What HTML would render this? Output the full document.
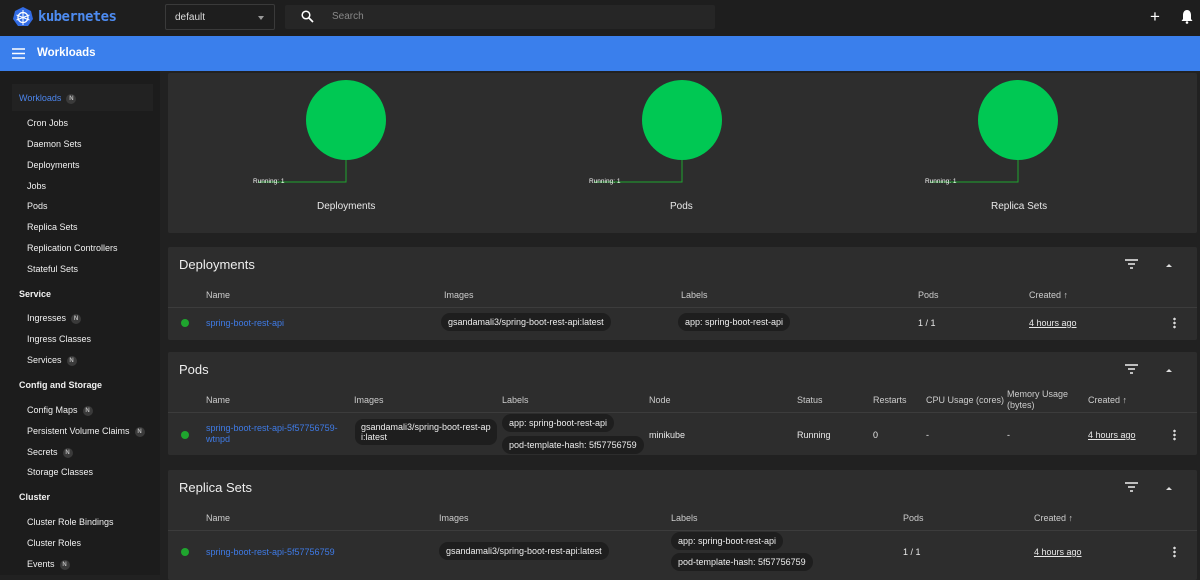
<!DOCTYPE html><html><head><meta charset="utf-8"><style>
*{margin:0;padding:0;box-sizing:border-box}
body{width:1200px;height:575px;overflow:hidden;background:#212121;font-family:"Liberation Sans",sans-serif;color:#e8e8e8;position:relative;font-size:9px}
.a{position:absolute;white-space:nowrap}
.top{left:0;top:0;width:1200px;height:36px;background:#1e1e1e}
.blue{left:0;top:36px;width:1200px;height:35px;background:#3a7fec}
.side{left:0;top:71px;width:160px;height:504px;background:#1c1c1c}
.card{background:#2d2d2d;border-radius:2px}
.n{display:inline-block;width:10px;height:10px;border-radius:50%;background:#3a3a3a;color:#bbb;font-size:6px;text-align:center;line-height:10px;margin-left:5px;vertical-align:1px;font-weight:bold}
.si{left:27px;font-size:9px;color:#f0f0f0}
.sh{left:19px;font-size:9px;font-weight:bold;color:#f0f0f0}
.ttl{font-size:13px;color:#eee}
.hd{font-size:9px;color:#ccc}
.lk{color:#3f7be6;font-size:9px}
.chip{background:#1e1e1e;border-radius:9px;padding:4px 7px;font-size:9px;color:#eee}
.dot{width:8px;height:8px;border-radius:50%;background:#1fa52e}
.sep{height:1px;background:#3c3c3c}
.circ{width:80px;height:80px;border-radius:50%;background:#00c853}
.u{text-decoration:underline}
.keb{width:3px;height:12px;background:radial-gradient(circle,#ddd 1.2px,transparent 1.4px) 0 0/3px 4px}
</style></head><body>
<div class="a top"></div>
<svg class="a" style="left:12px;top:6px" width="22" height="22" viewBox="0 0 22 22"><polygon points="11,1 19,5 21,13 16,20 6,20 1,13 3,5" fill="#326ce5"/><circle cx="11" cy="11.5" r="5" fill="none" stroke="#fff" stroke-width="1.3"/><path d="M11 4v15M4.5 9l13 5M17.5 9l-13 5" stroke="#fff" stroke-width="1"/></svg>
<div class="a" style="left:38px;top:9px;font-size:14px;font-weight:bold;color:#4d8bf0;font-family:'DejaVu Sans Mono',monospace;letter-spacing:-0.6px">kubernetes</div>
<div class="a" style="left:165px;top:4px;width:110px;height:26px;border:1px solid #3a3a3a;border-radius:2px;background:#1e1e1e"></div>
<div class="a" style="left:175px;top:12px;font-size:10px;color:#ddd">default</div>
<div class="a" style="left:258px;top:16px;border:3px solid transparent;border-top:4px solid #999"></div>
<div class="a" style="left:285px;top:5px;width:430px;height:24px;background:#262626;border-radius:2px"></div>
<svg class="a" style="left:301px;top:10px" width="13" height="13"><circle cx="5" cy="5" r="3.8" fill="none" stroke="#fff" stroke-width="1.5"/><path d="M8 8l4 4" stroke="#fff" stroke-width="1.7"/></svg>
<div class="a" style="left:332px;top:11px;font-size:10px;color:#888">Search</div>
<div class="a" style="left:1150px;top:7px;font-size:17px;color:#fff">+</div>
<svg class="a" style="left:1181px;top:9px" width="12" height="15" viewBox="0 0 12 15"><path d="M6 1c-3 0-4 3-4 5v4l-1.5 2h11L10 10V6c0-2-1-5-4-5z" fill="#fff"/><circle cx="6" cy="13.5" r="1.3" fill="#fff"/></svg>
<div class="a blue"></div>
<svg class="a" style="left:12px;top:48px" width="14" height="11"><path d="M0 1h13M0 5.5h13M0 10h13" stroke="#fff" stroke-width="1.6"/></svg>
<div class="a" style="left:37px;top:47px;font-size:11.5px;font-weight:bold;color:#fff">Workloads</div>
<div class="a side"></div>
<div class="a" style="left:12px;top:84px;width:141px;height:27px;background:#222"></div>
<div class="a" style="left:19px;top:93px;font-size:9px;color:#4c86ee">Workloads<span class="n">N</span></div>
<div class="a si" style="top:118px">Cron Jobs</div>
<div class="a si" style="top:139px">Daemon Sets</div>
<div class="a si" style="top:160px">Deployments</div>
<div class="a si" style="top:181px">Jobs</div>
<div class="a si" style="top:201px">Pods</div>
<div class="a si" style="top:222px">Replica Sets</div>
<div class="a si" style="top:243px">Replication Controllers</div>
<div class="a si" style="top:264px">Stateful Sets</div>
<div class="a sh" style="top:289px">Service</div>
<div class="a si" style="top:313px">Ingresses<span class="n">N</span></div>
<div class="a si" style="top:334px">Ingress Classes</div>
<div class="a si" style="top:355px">Services<span class="n">N</span></div>
<div class="a sh" style="top:380px">Config and Storage</div>
<div class="a si" style="top:405px">Config Maps<span class="n">N</span></div>
<div class="a si" style="top:426px">Persistent Volume Claims<span class="n">N</span></div>
<div class="a si" style="top:447px">Secrets<span class="n">N</span></div>
<div class="a si" style="top:467px">Storage Classes</div>
<div class="a sh" style="top:492px">Cluster</div>
<div class="a si" style="top:517px">Cluster Role Bindings</div>
<div class="a si" style="top:538px">Cluster Roles</div>
<div class="a si" style="top:559px">Events<span class="n">N</span></div>

<div class="a card" style="left:168px;top:73px;width:1029px;height:160px"></div>
<div class="a circ" style="left:306px;top:80px"></div>
<div class="a circ" style="left:642px;top:80px"></div>
<div class="a circ" style="left:978px;top:80px"></div>
<svg class="a" style="left:168px;top:73px" width="1029" height="160"><g stroke="#1fa52e" stroke-width="1" fill="none"><path d="M178 87v22h-88"/><path d="M514 87v22h-88"/><path d="M850 87v22h-88"/></g></svg>
<div class="a" style="left:253px;top:178px;font-size:6.5px;color:#fff">Running: 1</div>
<div class="a" style="left:589px;top:178px;font-size:6.5px;color:#fff">Running: 1</div>
<div class="a" style="left:925px;top:178px;font-size:6.5px;color:#fff">Running: 1</div>
<div class="a" style="left:317px;top:201px;font-size:10px">Deployments</div>
<div class="a" style="left:670px;top:201px;font-size:10px">Pods</div>
<div class="a" style="left:991px;top:201px;font-size:10px">Replica Sets</div>

<!-- Deployments -->
<div class="a card" style="left:168px;top:247px;width:1029px;height:93px"></div>
<div class="a ttl" style="left:179px;top:257px">Deployments</div>
<svg class="a" style="left:1125px;top:259px" width="13" height="10"><path d="M0 1h13M3 5h7M5 9h3" stroke="#eee" stroke-width="1.4"/></svg>
<div class="a" style="left:1166px;top:261px;border:3px solid transparent;border-bottom:3px solid #ddd"></div>
<div class="a hd" style="left:206px;top:290px">Name</div>
<div class="a hd" style="left:444px;top:290px">Images</div>
<div class="a hd" style="left:681px;top:290px">Labels</div>
<div class="a hd" style="left:918px;top:290px">Pods</div>
<div class="a hd" style="left:1029px;top:290px">Created ↑</div>
<div class="a sep" style="left:168px;top:307px;width:1029px"></div>
<div class="a dot" style="left:181px;top:319px"></div>
<div class="a lk" style="left:206px;top:318px">spring-boot-rest-api</div>
<div class="a chip" style="left:441px;top:313px">gsandamali3/spring-boot-rest-api:latest</div>
<div class="a chip" style="left:678px;top:313px">app: spring-boot-rest-api</div>
<div class="a" style="left:918px;top:318px">1 / 1</div>
<div class="a u" style="left:1029px;top:318px">4 hours ago</div>
<div class="a keb" style="left:1173px;top:317px"></div>

<!-- Pods -->
<div class="a card" style="left:168px;top:352px;width:1029px;height:103px"></div>
<div class="a ttl" style="left:179px;top:362px">Pods</div>
<svg class="a" style="left:1125px;top:364px" width="13" height="10"><path d="M0 1h13M3 5h7M5 9h3" stroke="#eee" stroke-width="1.4"/></svg>
<div class="a" style="left:1166px;top:366px;border:3px solid transparent;border-bottom:3px solid #ddd"></div>
<div class="a hd" style="left:206px;top:395px">Name</div>
<div class="a hd" style="left:354px;top:395px">Images</div>
<div class="a hd" style="left:502px;top:395px">Labels</div>
<div class="a hd" style="left:649px;top:395px">Node</div>
<div class="a hd" style="left:797px;top:395px">Status</div>
<div class="a hd" style="left:873px;top:395px">Restarts</div>
<div class="a hd" style="left:926px;top:395px">CPU Usage (cores)</div>
<div class="a hd" style="left:1007px;top:389px;line-height:11px">Memory Usage<br>(bytes)</div>
<div class="a hd" style="left:1088px;top:395px">Created ↑</div>
<div class="a sep" style="left:168px;top:412px;width:1029px"></div>
<div class="a dot" style="left:181px;top:431px"></div>
<div class="a lk" style="left:206px;top:423px;line-height:11px">spring-boot-rest-api-5f57756759-<br>wtnpd</div>
<div class="a chip" style="left:355px;top:419px;border-radius:8px;line-height:10px;padding:3px 6px">gsandamali3/spring-boot-rest-ap<br>i:latest</div>
<div class="a chip" style="left:502px;top:414px">app: spring-boot-rest-api</div>
<div class="a chip" style="left:502px;top:436px">pod-template-hash: 5f57756759</div>
<div class="a" style="left:649px;top:430px">minikube</div>
<div class="a" style="left:797px;top:430px">Running</div>
<div class="a" style="left:873px;top:430px">0</div>
<div class="a" style="left:926px;top:430px">-</div>
<div class="a" style="left:1007px;top:430px">-</div>
<div class="a u" style="left:1088px;top:430px">4 hours ago</div>
<div class="a keb" style="left:1173px;top:429px"></div>

<!-- Replica Sets -->
<div class="a card" style="left:168px;top:470px;width:1029px;height:110px"></div>
<div class="a ttl" style="left:179px;top:480px">Replica Sets</div>
<svg class="a" style="left:1125px;top:482px" width="13" height="10"><path d="M0 1h13M3 5h7M5 9h3" stroke="#eee" stroke-width="1.4"/></svg>
<div class="a" style="left:1166px;top:484px;border:3px solid transparent;border-bottom:3px solid #ddd"></div>
<div class="a hd" style="left:206px;top:513px">Name</div>
<div class="a hd" style="left:439px;top:513px">Images</div>
<div class="a hd" style="left:671px;top:513px">Labels</div>
<div class="a hd" style="left:903px;top:513px">Pods</div>
<div class="a hd" style="left:1034px;top:513px">Created ↑</div>
<div class="a sep" style="left:168px;top:530px;width:1029px"></div>
<div class="a dot" style="left:181px;top:548px"></div>
<div class="a lk" style="left:206px;top:547px">spring-boot-rest-api-5f57756759</div>
<div class="a chip" style="left:439px;top:542px">gsandamali3/spring-boot-rest-api:latest</div>
<div class="a chip" style="left:671px;top:532px">app: spring-boot-rest-api</div>
<div class="a chip" style="left:671px;top:553px">pod-template-hash: 5f57756759</div>
<div class="a" style="left:903px;top:547px">1 / 1</div>
<div class="a u" style="left:1034px;top:547px">4 hours ago</div>
<div class="a keb" style="left:1173px;top:546px"></div>
</body></html>
